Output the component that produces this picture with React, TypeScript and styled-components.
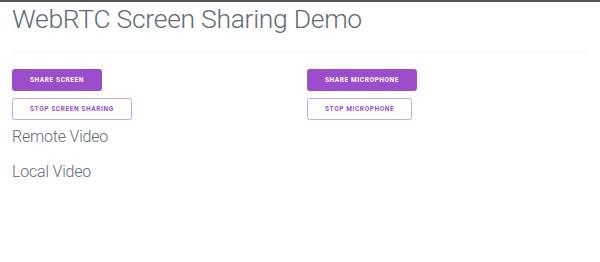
import React from "react";
import styled, { createGlobalStyle } from "styled-components";

const Global = createGlobalStyle`
  html, body { margin: 0; padding: 0; background: #fff; }
  body {
    font-family: Roboto, "Liberation Sans", sans-serif;
    font-weight: 300;
    color: #606c76;
    border-top: 2px solid #555;
  }
  * { box-sizing: border-box; }
`;

const Container = styled.div`
  padding: 0 12px;
`;

const Title = styled.h1`
  margin: 0;
  padding-top: 1px;
  font-size: 26.5px;
  font-weight: 300;
  line-height: 32px;
  letter-spacing: -0.3px;
`;

const Divider = styled.hr`
  border: 0;
  border-top: 1px solid #f4f5f6;
  margin: 16px 0 17px;
`;

const Row = styled.div`
  display: grid;
  grid-template-columns: 295px 1fr;
`;

const Column = styled.div`
  display: flex;
  flex-direction: column;
  align-items: flex-start;
  gap: 7px;
`;

const Button = styled.button<{ $outline?: boolean }>`
  height: 22px;
  padding: 0 17px;
  border-radius: 2.5px;
  font-family: Roboto, "Liberation Sans", sans-serif;
  font-weight: 700;
  font-size: 6.5px;
  letter-spacing: 0.6px;
  text-transform: uppercase;
  cursor: pointer;
  border: 1px solid ${(p) => (p.$outline ? "#cba6e3" : "#9b4dca")};
  background: ${(p) => (p.$outline ? "transparent" : "#9b4dca")};
  color: ${(p) => (p.$outline ? "#9b4dca" : "#fff")};
`;

const Heading = styled.h3`
  margin: 6px 0 14px;
  font-size: 16px;
  font-weight: 300;
  line-height: 21px;
  letter-spacing: -0.2px;
`;

export default function App() {
  return (
    <>
      <Global />
      <Container>
        <Title>WebRTC Screen Sharing Demo</Title>
        <Divider />
        <Row>
          <Column>
            <Button>Share Screen</Button>
            <Button $outline>Stop Screen Sharing</Button>
          </Column>
          <Column>
            <Button>Share Microphone</Button>
            <Button $outline>Stop Microphone</Button>
          </Column>
        </Row>
        <Heading>Remote Video</Heading>
        <Heading>Local Video</Heading>
      </Container>
    </>
  );
}
